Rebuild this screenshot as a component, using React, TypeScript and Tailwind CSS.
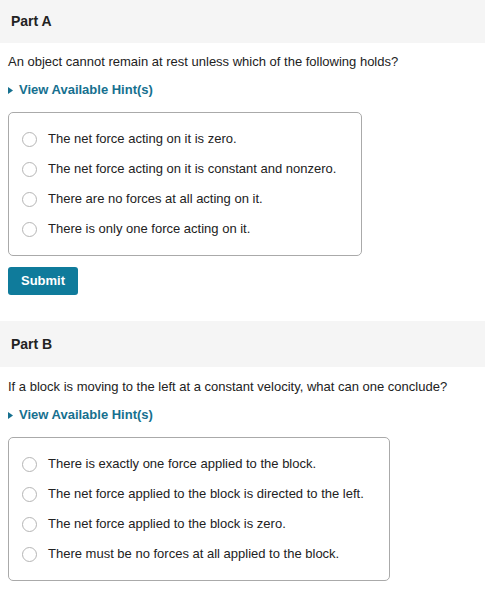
import React from 'react';

type Part = {
  label: string;
  question: string;
  options: string[];
};

const parts: Part[] = [
  {
    label: 'Part A',
    question: 'An object cannot remain at rest unless which of the following holds?',
    options: [
      'The net force acting on it is zero.',
      'The net force acting on it is constant and nonzero.',
      'There are no forces at all acting on it.',
      'There is only one force acting on it.',
    ],
  },
  {
    label: 'Part B',
    question: 'If a block is moving to the left at a constant velocity, what can one conclude?',
    options: [
      'There is exactly one force applied to the block.',
      'The net force applied to the block is directed to the left.',
      'The net force applied to the block is zero.',
      'There must be no forces at all applied to the block.',
    ],
  },
];

const PartSection: React.FC<{ part: Part; first?: boolean }> = ({ part, first }) => (
  <section>
    <div
      className={`${first ? 'h-[43px]' : 'h-[46px] mt-[26px]'} bg-[#f5f5f5] px-[11px] flex items-center`}
    >
      <h3 className="text-[14px] font-bold text-[#222]">{part.label}</h3>
    </div>

    <p className={`${first ? 'mt-[11px]' : 'mt-[12px]'} px-2 text-[13px] leading-[16px] text-[#222]`}>
      {part.question}
    </p>

    {/* hint toggle */}
    <button className="mt-[12px] ml-2 flex items-center gap-[6px] text-[13px] leading-[16px] font-bold text-[#16708f]">
      <svg width="5" height="7" viewBox="0 0 5 7" className="mt-[1px]">
        <path d="M0 0 L5 3.5 L0 7 Z" fill="#16708f" />
      </svg>
      View Available Hint(s)
    </button>

    <div className="mt-[14px] ml-2 inline-block border border-[#aaa] rounded-[5px] pl-[13px] pr-[25px] py-[11px]">
      {part.options.map((opt) => (
        <label key={opt} className="h-[30px] flex items-center gap-[11px] text-[13px] text-[#222]">
          <span className="w-[15px] h-[15px] rounded-full border border-[#b5b5b5] bg-white shrink-0" />
          {opt}
        </label>
      ))}
    </div>

    <div className="mt-[11px] px-2">
      <button className="w-[70px] h-[28px] rounded-[3px] bg-[#0f7b9b] text-white text-[13px] font-bold">
        Submit
      </button>
    </div>
  </section>
);

export default function App() {
  return (
    <div className="w-[485px] h-[591px] overflow-hidden bg-white font-['Liberation_Sans',Arial,sans-serif]">
      {parts.map((p, i) => (
        <PartSection key={p.label} part={p} first={i === 0} />
      ))}
    </div>
  );
}
